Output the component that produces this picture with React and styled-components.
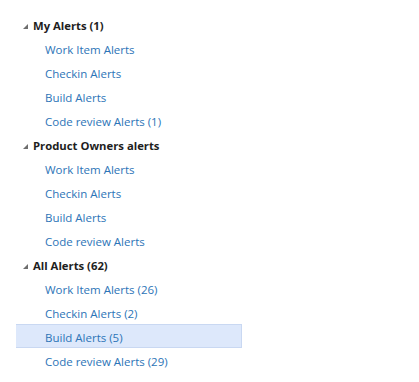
import React from 'react';
import styled, { createGlobalStyle } from 'styled-components';

const GlobalStyle = createGlobalStyle`
  body {
    margin: 0;
    background: #ffffff;
    font-family: "Segoe UI", "Open Sans", "Liberation Sans", sans-serif;
  }
`;

const Tree = styled.div`
  width: 226px;
  margin: 12px 0 0 16px;
`;

const Group = styled.div`
  display: flex;
  flex-direction: column;
`;

const Header = styled.div`
  display: flex;
  align-items: center;
  box-sizing: border-box;
  height: 24px;
  padding: 3px 0 0 7px;
  font-size: 11.3px;
  font-weight: 700;
  color: #1e1e1e;
`;

const Arrow = styled.svg`
  width: 5px;
  height: 5px;
  margin-right: 5px;
  margin-top: 2px;
`;

const Item = styled.div`
  display: flex;
  align-items: center;
  box-sizing: border-box;
  height: 24px;
  padding: 3px 0 0 29px;
  font-size: 11.5px;
  color: #2c74b7;
  background: ${p => (p.$selected ? '#dde8fb' : 'transparent')};
  border: 1px solid ${p => (p.$selected ? '#c9d8f2' : 'transparent')};
  border-left: none;
`;

const groups = [
  {
    title: 'My Alerts (1)',
    items: ['Work Item Alerts', 'Checkin Alerts', 'Build Alerts', 'Code review Alerts (1)'],
  },
  {
    title: 'Product Owners alerts',
    items: ['Work Item Alerts', 'Checkin Alerts', 'Build Alerts', 'Code review Alerts'],
  },
  {
    title: 'All Alerts (62)',
    items: ['Work Item Alerts (26)', 'Checkin Alerts (2)', 'Build Alerts (5)', 'Code review Alerts (29)'],
    selected: 2,
  },
];

const App = () => {
  return (
    <>
      <GlobalStyle />
      <Tree>
        {groups.map((group, gi) => (
          <Group key={gi}>
            <Header>
              <Arrow viewBox="0 0 5 5">
                <polygon points="5,0 5,5 0,5" fill="#6e6e6e" />
              </Arrow>
              {group.title}
            </Header>
            {group.items.map((item, i) => (
              <Item key={i} $selected={group.selected === i}>
                {item}
              </Item>
            ))}
          </Group>
        ))}
      </Tree>
    </>
  );
};

export default App;
